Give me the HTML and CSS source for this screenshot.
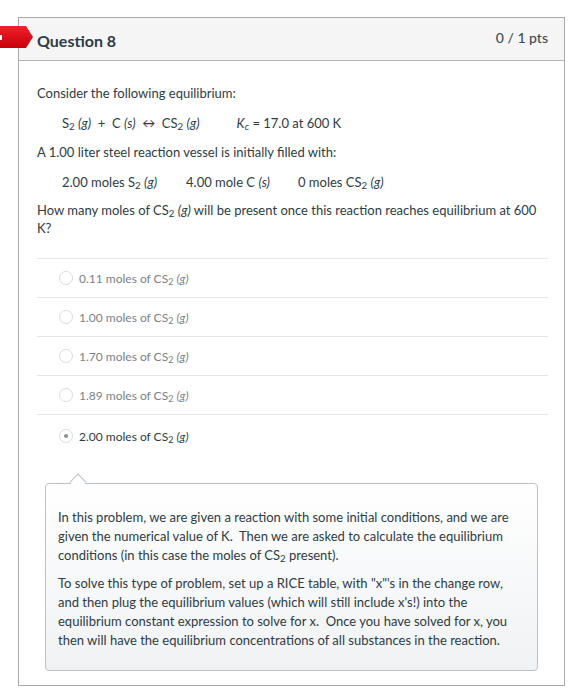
FILE: index.html
```html
<!DOCTYPE html>
<html>
<head>
<meta charset="utf-8">
<link rel="stylesheet" href="styles.css">
</head>
<body>
<div class="flag" aria-label="Incorrect"></div>
<div class="card">
  <div class="header">
    <div class="title">Question 8</div>
    <div class="pts">0 / 1 pts</div>
  </div>
  <div class="body">
    <p class="p1">Consider the following equilibrium:</p>
    <p class="eq"><span>S<sub>2</sub> <em>(g)</em> &nbsp;+&nbsp; C <em>(s)</em> &nbsp;<span class="arr">↔</span>&nbsp; CS<sub>2</sub> <em>(g)</em></span><span class="kc"><em>K<sub>c</sub></em> = 17.0 at 600 K</span></p>
    <p class="p2">A 1.00 liter steel reaction vessel is initially filled with:</p>
    <p class="moles"><span class="m1">2.00 moles S<sub>2</sub> <em>(g)</em></span><span class="m2">4.00 mole C <em>(s)</em></span><span class="m3">0 moles CS<sub>2</sub> <em>(g)</em></span></p>
    <p class="p3">How many moles of CS<sub>2</sub> <em>(g)</em> will be present once this reaction reaches equilibrium at 600 K?</p>
    <div class="answers">
      <div class="answer"><span class="radio"></span><span>0.11 moles of CS<sub>2</sub> <em>(g)</em></span></div>
      <div class="answer"><span class="radio"></span><span>1.00 moles of CS<sub>2</sub> <em>(g)</em></span></div>
      <div class="answer"><span class="radio"></span><span>1.70 moles of CS<sub>2</sub> <em>(g)</em></span></div>
      <div class="answer"><span class="radio"></span><span>1.89 moles of CS<sub>2</sub> <em>(g)</em></span></div>
      <div class="answer selected"><span class="radio"><span class="dot"></span></span><span>2.00 moles of CS<sub>2</sub> <em>(g)</em></span></div>
    </div>
    <div class="feedback">
      <p>In this problem, we are given a reaction with some initial conditions, and we are given the numerical value of K.&nbsp; Then we are asked to calculate the equilibrium conditions (in this case the moles of CS<sub>2</sub> present).</p>
      <p>To solve this type of problem, set up a RICE table, with "x"'s in the change row, and then plug the equilibrium values (which will still include x's!) into the equilibrium constant expression to solve for x.&nbsp; Once you have solved for x, you then will have the equilibrium concentrations of all substances in the reaction.</p>
    </div>
  </div>
</div>
</body>
</html>
```
FILE: styles.css
```css
* { box-sizing: border-box; }
html, body { margin: 0; padding: 0; background: #fff; }
body {
  font-family: Lato, "Liberation Sans", sans-serif;
  color: #2d3b45;
  font-size: 13px;
}
.flag {
  position: absolute;
  left: 0;
  top: 26px;
  width: 33px;
  height: 22px;
  background: linear-gradient(#f0202a, #c8000a);
  clip-path: polygon(0 0, 26px 0, 33px 11px, 26px 22px, 0 22px);
}
.flag::before {
  content: "";
  position: absolute;
  left: 0;
  top: 9px;
  width: 2px;
  height: 5px;
  background: #fff;
}
.card {
  margin: 17px 0 0 18px;
  width: 547px;
  height: 669px;
  border: 1px solid #a9a9a9;
}
.header {
  height: 43px;
  background: #f5f5f5;
  border-bottom: 1px solid #b5b5b5;
  display: flex;
  justify-content: space-between;
  align-items: center;
  padding: 0 16px 0 18px;
}
.title {
  font-size: 16px;
  font-weight: bold;
  color: #2d3b45;
  padding-top: 3px;
}
.pts {
  font-size: 14px;
  color: #3d4b55;
  font-weight: 500;
  padding-bottom: 4px;
}
.body {
  padding: 23px 16px 0 18px;
}
p { margin: 0; line-height: 18px; }
sub { font-size: 0.75em; vertical-align: -2px; line-height: 0; }
em { font-style: italic; }
.p1 { margin-bottom: 12px; }
.eq { padding-left: 25px; margin-bottom: 11px; display: flex; }
.arr { font-size: 13px; }
.kc { margin-left: 37px; }
.p2 { margin-bottom: 12px; }
.moles { padding-left: 25px; margin-bottom: 10px; display: flex; }
.m2 { margin-left: 29px; }
.m3 { margin-left: 28px; }
.p3 { margin-bottom: 21px; }
.answers { border-top: 1px solid #e6e6e6; }
.answer {
  height: 39px;
  border-bottom: 1px solid #e6e6e6;
  display: flex;
  align-items: center;
  padding-left: 22px;
  font-size: 12px;
  color: #7a8288;
}
.answer:last-child { border-bottom: none; height: 42px; }
.answer.selected { color: #2d3b45; }
.radio {
  width: 14px;
  height: 14px;
  border: 1px solid #d8dcdf;
  border-radius: 50%;
  margin-right: 6px;
  display: flex;
  align-items: center;
  justify-content: center;
}
.dot { width: 4px; height: 4px; border-radius: 50%; background: #8a8f94; }
.feedback {
  position: relative;
  margin: 26px 10px 0 8px;
  border: 1px solid #b8c0c8;
  border-radius: 4px;
  background: linear-gradient(#ffffff, #f0f2f4);
  padding: 24px 12px 23px 12px;
  height: 188px;
}
.feedback::before {
  content: "";
  position: absolute;
  left: 26px;
  top: -8px;
  width: 11px;
  height: 11px;
  background: #fff;
  border-left: 1px solid #b8c0c8;
  border-top: 1px solid #b8c0c8;
  transform: rotate(45deg);
}
.feedback p { line-height: 19px; }
.feedback p + p { margin-top: 9px; }
```
